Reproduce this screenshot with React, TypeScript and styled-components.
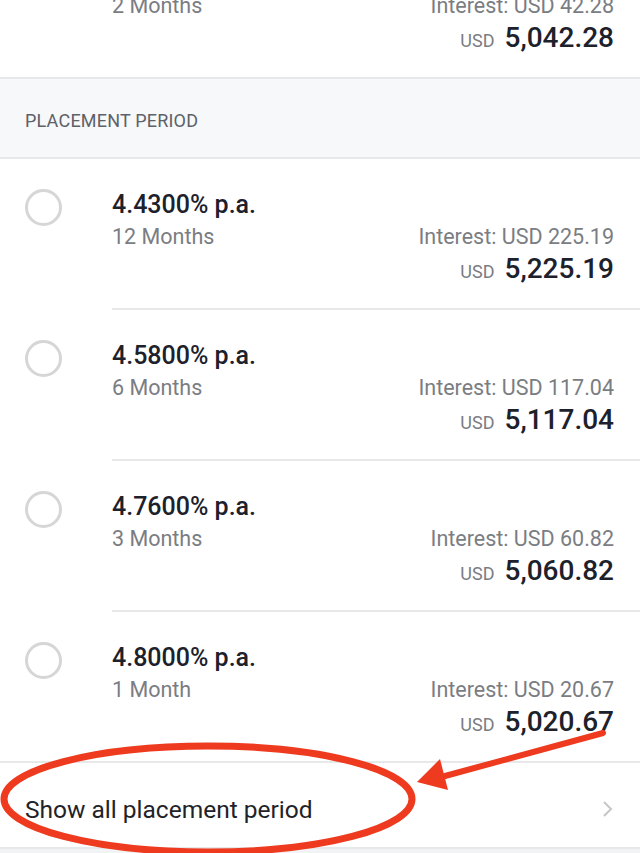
import React from 'react'
import styled, { createGlobalStyle } from 'styled-components'

const GlobalStyle = createGlobalStyle`
  html, body {
    margin: 0;
    padding: 0;
    background: #f2f3f5;
  }
  body {
    font-family: Roboto, 'Noto Sans', Arial, sans-serif;
    -webkit-font-smoothing: antialiased;
  }
`

const Screen = styled.div`
  position: relative;
  width: 640px;
  height: 853px;
  overflow: hidden;
  background: #f2f3f5;
`

const Scroller = styled.div`
  /* page is scrolled: first option sits partly above the viewport */
  margin-top: -72px;
  background: #fff;
`

const Row = styled.div<{ $fullLine?: boolean }>`
  display: flex;
  height: 151px;
  box-sizing: border-box;
  border-bottom: ${({ $fullLine }) => ($fullLine ? '2px solid #e7e8ea' : 'none')};
`

const RadioCell = styled.div`
  width: 112px;
  flex-shrink: 0;
  padding: 30px 0 0 25px;
  box-sizing: border-box;
`

const Radio = styled.span`
  display: block;
  width: 37px;
  height: 37px;
  box-sizing: border-box;
  border-radius: 50%;
  border: 3px solid #d6d6d6;
`

const Body = styled.div<{ $fullLine?: boolean }>`
  flex: 1;
  padding: 32px 26px 0 0;
  box-sizing: border-box;
  border-bottom: ${({ $fullLine }) => ($fullLine ? 'none' : '2px solid #e7e8ea')};
`

const Rate = styled.div`
  font-size: 25px;
  line-height: 28px;
  font-weight: 500;
  color: #1c212b;
`

const Line = styled.div`
  display: flex;
  justify-content: space-between;
  align-items: center;
  height: 34px;
`

const Term = styled.span`
  font-size: 21.5px;
  color: #7a7d82;
`

const Interest = styled.span`
  font-size: 21.5px;
  color: #7a7d82;
`

const Total = styled.div`
  display: flex;
  justify-content: flex-end;
  align-items: baseline;
  gap: 10px;
  height: 32px;
  line-height: 32px;
`

const Currency = styled.span`
  font-size: 18px;
  color: #7a7d82;
`

const Amount = styled.span`
  font-size: 28px;
  font-weight: 500;
  color: #1c212b;
`

const SectionHeader = styled.div`
  display: flex;
  align-items: center;
  height: 80px;
  box-sizing: border-box;
  padding: 4px 0 0 25px;
  background: #f7f8fa;
  border-bottom: 2px solid #e7e8ea;
  font-size: 18px;
  letter-spacing: 0.2px;
  color: #5d6168;
  text-transform: uppercase;
`

const LinkRow = styled.div`
  display: flex;
  align-items: center;
  justify-content: space-between;
  height: 86px;
  padding: 8px 26px 0 25px;
  background: #fff;
  border-bottom: 2px solid #e7e8ea;
  box-sizing: border-box;
`

const LinkText = styled.span`
  font-size: 24.5px;
  color: #1f2329;
`

const Annotation = styled.svg`
  position: absolute;
  left: 0;
  top: 0;
  pointer-events: none;
`

type Option = { rate?: string; term: string; interest: string; total: string }

const options: Option[] = [
  { rate: '4.4300% p.a.', term: '12 Months', interest: 'USD 225.19', total: '5,225.19' },
  { rate: '4.5800% p.a.', term: '6 Months', interest: 'USD 117.04', total: '5,117.04' },
  { rate: '4.7600% p.a.', term: '3 Months', interest: 'USD 60.82', total: '5,060.82' },
  { rate: '4.8000% p.a.', term: '1 Month', interest: 'USD 20.67', total: '5,020.67' },
]

const OptionRow = ({ o, fullLine }: { o: Option; fullLine?: boolean }) => (
  <Row $fullLine={fullLine}>
    <RadioCell>
      <Radio />
    </RadioCell>
    <Body $fullLine={fullLine}>
      <Rate>{o.rate}</Rate>
      <Line>
        <Term>{o.term}</Term>
        <Interest>Interest: {o.interest}</Interest>
      </Line>
      <Total>
        <Currency>USD</Currency>
        <Amount>{o.total}</Amount>
      </Total>
    </Body>
  </Row>
)

export default function App() {
  return (
    <>
      <GlobalStyle />
      <Screen>
        <Scroller>
          <OptionRow
            fullLine
            o={{ rate: '4.6000% p.a.', term: '2 Months', interest: 'USD 42.28', total: '5,042.28' }}
          />
          <SectionHeader>Placement period</SectionHeader>
          {options.map((o, i) => (
            <OptionRow key={o.term} o={o} fullLine={i === options.length - 1} />
          ))}
          <LinkRow>
            <LinkText>Show all placement period</LinkText>
            <svg width="12" height="18" viewBox="0 0 12 18">
              <path d="M2 2l7 7-7 7" fill="none" stroke="#c4c6c9" strokeWidth="2" />
            </svg>
          </LinkRow>
        </Scroller>
        <Annotation width="640" height="853" viewBox="0 0 640 853">
          <ellipse cx="208" cy="799" rx="204" ry="53" fill="none" stroke="#ee3a1f" strokeWidth="7" />
          <path d="M603 733 L445 776" stroke="#ee3a1f" strokeWidth="6" strokeLinecap="round" />
          <polygon points="417,782 440,759 448,790" fill="#ee3a1f" />
        </Annotation>
      </Screen>
    </>
  )
}
